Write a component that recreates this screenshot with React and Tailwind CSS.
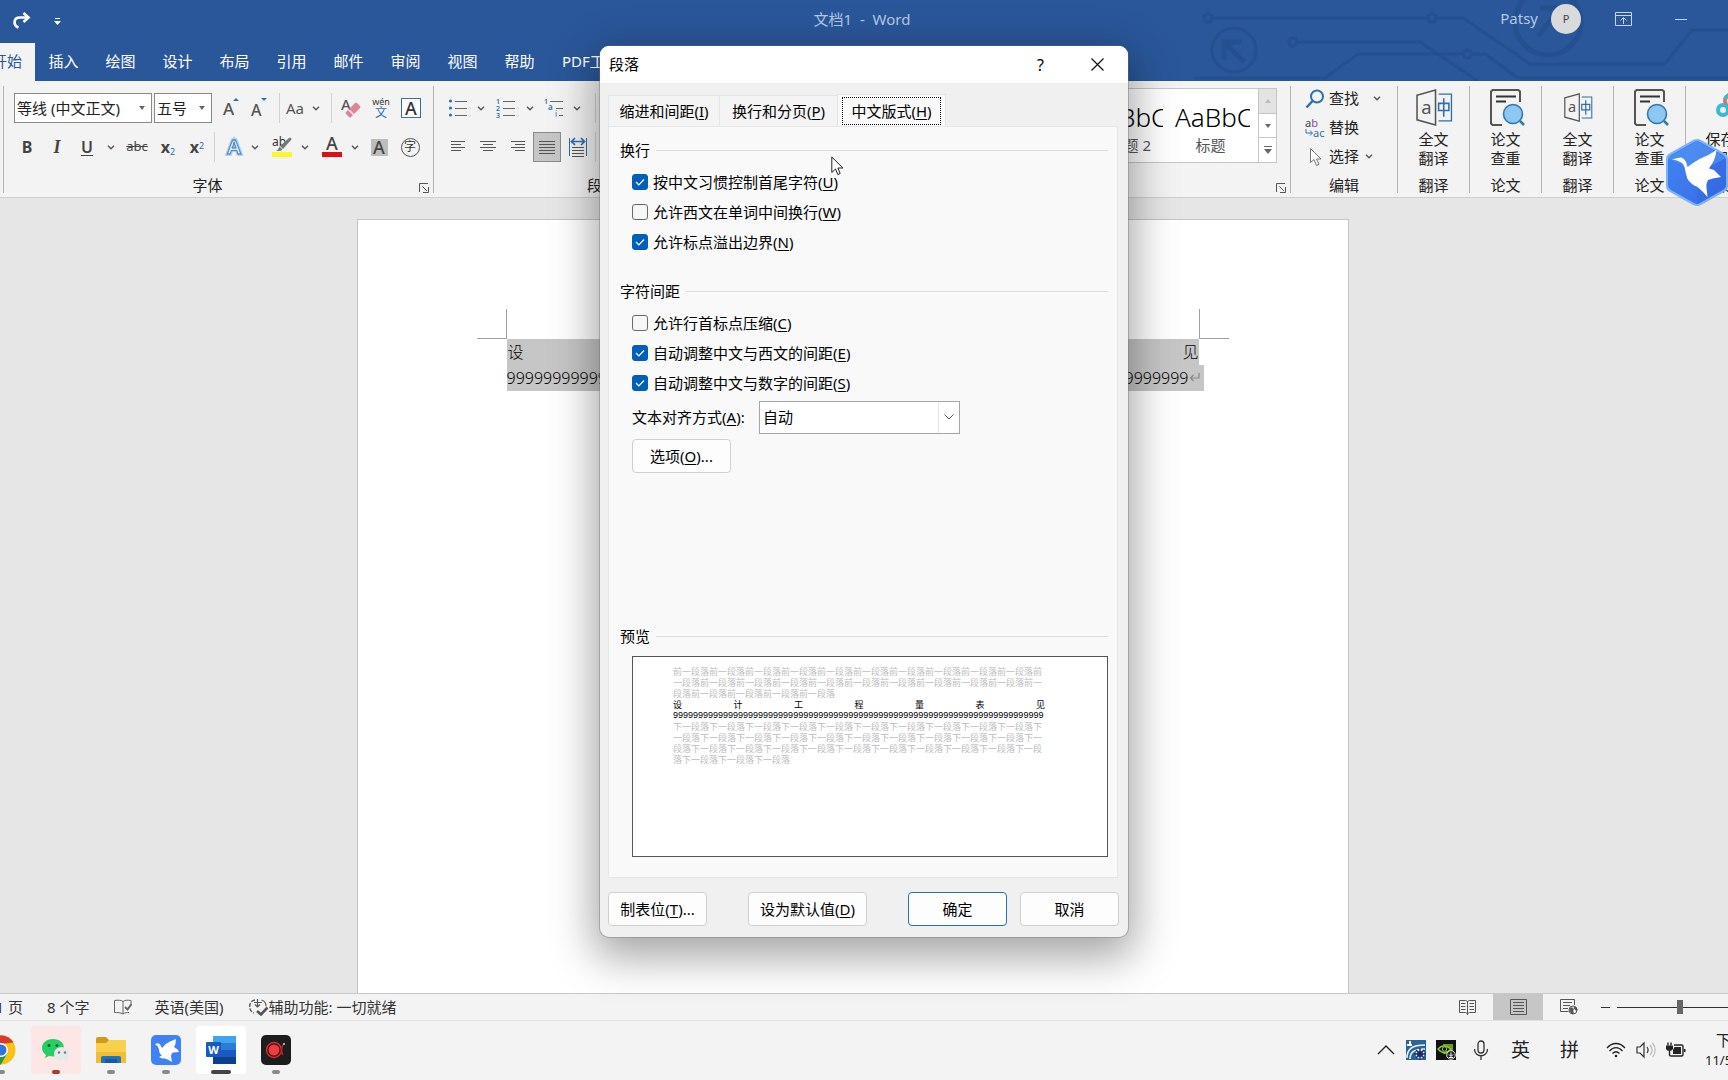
import React from "react";

const FONT = "font-['Noto_Sans','Noto_Sans_CJK_SC',sans-serif]";

function Chevron({ className = "w-4" }) {
  return (
    <span className={"flex shrink-0 justify-center " + className}>
      <svg width="8" height="5" viewBox="0 0 8 5" fill="none" stroke="#555" strokeWidth="1.4">
        <path d="M1 .8 4 3.8 7 .8" />
      </svg>
    </span>
  );
}

function Tool({ label, className = "w-[30px]", children }) {
  return (
    <button aria-label={label} className={"flex h-[30px] shrink-0 items-center justify-center " + className}>
      {children}
    </button>
  );
}

function Sep({ className = "mx-1" }) {
  return <span className={"h-[30px] w-px shrink-0 bg-[#d2d2d2] " + className} />;
}

function GroupLine() {
  return <span className="mt-[5px] h-[107px] w-px shrink-0 bg-[#b4b4b4]" />;
}

function Launcher({ className }) {
  return (
    <button aria-label="更多设置" className={"absolute bottom-1 " + className}>
      <svg width="10" height="10" viewBox="0 0 10 10" fill="none" stroke="#555" strokeWidth="1">
        <path d="M.5 9V.5H9M3.5 3.5 8 8M9.5 4v5.5H4" />
      </svg>
    </button>
  );
}

function Combo({ label, value, className }) {
  return (
    <label className={"relative flex h-[30px] shrink-0 items-center border border-[#8a8a8a] bg-white " + className}>
      <select aria-label={label} className="h-full w-full appearance-none bg-transparent pl-0.5 text-[15px] text-[#222] outline-none">
        <option>{value}</option>
      </select>
      <svg className="pointer-events-none absolute right-1.5" width="6" height="4" viewBox="0 0 6 4">
        <path d="M0 0h6L3 4z" fill="#666" />
      </svg>
    </label>
  );
}

function AlignIcon({ rows, width = 16 }) {
  return (
    <svg width={width} height="14" viewBox={`0 0 ${width} 14`} stroke="#555" strokeWidth="1">
      {rows.map(([a, b], i) => (
        <path key={i} d={`M${a} ${i * 3 + 1}.5H${b}`} />
      ))}
    </svg>
  );
}

function FontGroup() {
  return (
    <section className="relative w-[429px] shrink-0">
      <div className="flex items-center pl-[10px] pt-3">
        <Combo label="字体" value="等线 (中文正文)" className="w-[138px]" />
        <Combo label="字号" value="五号" className="ml-0.5 w-[58px]" />
        <Tool label="增大字号" className="ml-[5px] w-7">
          <svg width="20" height="22" viewBox="0 0 20 22">
            <text x="2" y="18" fontSize="17" fontWeight="500" fill="#555">A</text>
            <path d="m12 4 3-3 3 3z" fill="#2f6fae" />
          </svg>
        </Tool>
        <Tool label="减小字号" className="w-7">
          <svg width="20" height="22" viewBox="0 0 20 22">
            <text x="2" y="19" fontSize="16" fontWeight="500" fill="#555">A</text>
            <path d="m12 1 3 3 3-3z" fill="#2f6fae" />
          </svg>
        </Tool>
        <Sep className="ml-1.5 mr-1" />
        <Tool label="更改大小写" className="w-[42px]">
          <span className="text-[15px] text-[#555]">Aa</span>
          <Chevron className="ml-1 w-4" />
        </Tool>
        <Sep className="ml-[5px] mr-1" />
        <Tool label="清除格式">
          <svg width="20" height="24" viewBox="0 0 20 24">
            <text x="0" y="14" fontSize="15" fontWeight="500" fill="#555">A</text>
            <path d="M14 7q1-1 2 0l3 3q1 1 0 2l-6 6-5-5zM7 14l5 5-2 2q-1 1-2 0l-3-3q-1-1 0-2z" fill="#e08496" />
          </svg>
        </Tool>
        <Tool label="拼音指南">
          <svg width="20" height="24" viewBox="0 0 20 24">
            <text x="10" y="9" textAnchor="middle" fontSize="9" fill="#333">wén</text>
            <text x="10" y="21" textAnchor="middle" fontSize="12" fill="#2f6fae">文</text>
          </svg>
        </Tool>
        <Tool label="字符边框">
          <span className="flex h-5 w-5 items-center justify-center border border-[#3d6e9c] bg-white text-[18px] font-medium leading-none text-[#333]">A</span>
        </Tool>
      </div>
      <div className="flex items-center pl-2 pt-[9px]">
        <Tool label="加粗"><b className="text-[16px] text-[#444]">B</b></Tool>
        <Tool label="倾斜"><i className="font-['Liberation_Serif',serif] text-[18px] font-bold text-[#444]">I</i></Tool>
        <Tool label="下划线"><span className="border-b border-[#444] text-[16px] font-semibold leading-4 text-[#444]">U</span></Tool>
        <Chevron className="w-[18px]" />
        <Tool label="删除线" className="w-[34px]"><s className="text-[13px] text-[#444]">abc</s></Tool>
        <Tool label="下标" className="w-7">
          <span className="text-[16px] font-bold text-[#444]">x<sub className="text-[9px] font-normal text-[#2f6fae]">2</sub></span>
        </Tool>
        <Tool label="上标" className="w-[30px]">
          <span className="text-[16px] font-bold text-[#444]">x<sup className="text-[9px] font-normal text-[#2f6fae]">2</sup></span>
        </Tool>
        <Sep className="ml-0.5 mr-1" />
        <Tool label="文本效果">
          <svg width="20" height="22" viewBox="0 0 20 22">
            <text x="10" y="18" textAnchor="middle" fontSize="20" fontWeight="600" fill="#fff" stroke="#a9cfee" strokeWidth="3.5">A</text>
            <text x="10" y="18" textAnchor="middle" fontSize="20" fontWeight="600" fill="#fff" stroke="#3d7db8" strokeWidth="1">A</text>
          </svg>
        </Tool>
        <Chevron className="w-3" />
        <Tool label="突出显示" className="ml-1 w-[34px]">
          <svg width="22" height="22" viewBox="0 0 22 22">
            <text x="1" y="10" fontSize="12" fill="#333">ab</text>
            <path d="M20 2q1 1 0 2l-8 9-3-3 9-8q1-1 2 0zM8.500 10.500l3 3q-2 2-6 1.500 2-1 3-4.500z" fill="#777" />
            <path d="M1 16h20v5H1z" fill="#fbf82a" />
          </svg>
        </Tool>
        <Chevron className="w-3" />
        <Tool label="字体颜色" className="ml-1 w-[34px]">
          <svg width="20" height="22" viewBox="0 0 20 22">
            <text x="10" y="14" textAnchor="middle" fontSize="18" fontWeight="500" fill="#444">A</text>
            <path d="M0 16h20v5H0z" fill="#dc1010" />
          </svg>
        </Tool>
        <Chevron className="w-3" />
        <Tool label="字符底纹" className="ml-0.5 w-8">
          <span className="flex h-[17px] w-[17px] items-center justify-center bg-[#bdbdbd] text-[18px] font-medium leading-none text-[#444]">A</span>
        </Tool>
        <Tool label="带圈字符">
          <span className="flex h-[19px] w-[19px] items-center justify-center rounded-full border border-[#555] text-[12px] leading-none text-[#333]">字</span>
        </Tool>
      </div>
      <h2 className="absolute bottom-0 w-full pr-[22px] text-center text-[15px] leading-6">字体</h2>
      <Launcher className="right-1" />
    </section>
  );
}

function ListIcon({ marks }) {
  return (
    <svg width="20" height="20" viewBox="0 0 20 20">
      {marks.map((m, i) =>
        m ? (
          <text key={i} x="0" y={i * 7 + 6} fontSize="7" fontWeight="600" fill="#2f6fae">{m}</text>
        ) : (
          <circle key={i} cx="2.5" cy={i * 7 + 3} r="1.6" fill="#2f6fae" />
        )
      )}
      <path d="M7 3.5h12M7 10.5h12M7 17.5h12" stroke="#666" />
    </svg>
  );
}

function ParagraphGroup() {
  return (
    <section className="relative w-[300px] shrink-0">
      <div className="flex items-center pl-[9px] pt-3">
        <Tool label="项目符号"><ListIcon marks={["", "", ""]} /></Tool>
        <Chevron />
        <Tool label="编号" className="w-[34px]"><ListIcon marks={["1", "2", "3"]} /></Tool>
        <Chevron className="w-[14px]" />
        <Tool label="多级列表" className="w-[34px]">
          <svg width="20" height="20" viewBox="0 0 20 20">
            <text x="0" y="6" fontSize="7" fontWeight="600" fill="#2f6fae">1</text>
            <text x="4" y="12" fontSize="8" fontWeight="600" fill="#2f6fae">a</text>
            <text x="11" y="19" fontSize="8" fill="#2f6fae">i</text>
            <path d="M6 3.5h13M12 10.5h7M15 17.5h4" stroke="#666" />
          </svg>
        </Tool>
        <Chevron className="w-3" />
        <Sep className="ml-3" />
      </div>
      <div className="flex items-center pl-[9px] pt-[9px]">
        <Tool label="左对齐"><AlignIcon rows={[[1, 15], [1, 11], [1, 15], [1, 11]]} /></Tool>
        <Tool label="居中"><AlignIcon rows={[[0, 16], [3, 13], [0, 16], [3, 13]]} /></Tool>
        <Tool label="右对齐"><AlignIcon rows={[[1, 15], [5, 15], [1, 15], [5, 15]]} /></Tool>
        <button aria-label="两端对齐" aria-pressed="true" className="flex h-[30px] w-7 items-center justify-center border border-[#8b8b8b] bg-[#c6c6c6]">
          <AlignIcon rows={[[0, 16], [0, 16], [0, 16], [0, 16], [0, 16]]} />
        </button>
        <Tool label="分散对齐" className="w-[34px]">
          <svg width="18" height="20" viewBox="0 0 18 20" fill="none">
            <path d="M.5 1v18M17.500 1v18" stroke="#2f6fae" />
            <path d="M3 4.500h12M6 1 2.500 4.500 6 8M12 1l3.500 3.500L12 8" stroke="#2f6fae" strokeWidth="1.700" />
            <path d="M3 10.500h12M3 13.500h12M3 16.500h12M3 19.500h12" stroke="#555" />
          </svg>
        </Tool>
        <Sep className="ml-0" />
      </div>
      <h2 className="absolute bottom-0 w-full pl-9 text-center text-[15px] leading-6">段落</h2>
    </section>
  );
}

function StylesGroup() {
  return (
    <section className="relative w-[170px] shrink-0">
      <div className="ml-auto mr-[13px] mt-[7px] flex h-[75px] w-[157px] border border-[#c6c6c6] bg-white">
        <button className="w-[46px] shrink-0 overflow-hidden pt-1.5">
          <span className="ml-0.5 block w-10 overflow-hidden whitespace-nowrap text-left text-[26px] font-light leading-8 text-black">
            <span className="-ml-1">BbC</span>
          </span>
          <span className="block whitespace-nowrap pr-4 text-right text-[15px] leading-6 text-[#555]">题 2</span>
        </button>
        <button className="w-[91px] overflow-hidden pt-1.5">
          <span className="block pl-2 text-left text-[26px] font-light leading-8 text-black">
            <span className="block w-[75px] overflow-hidden whitespace-nowrap">AaBbC</span>
          </span>
          <span className="block pr-1 text-center text-[15px] leading-6 text-[#555]">标题</span>
        </button>
        <div className="flex w-[18px] shrink-0 flex-col border-l border-[#c6c6c6]">
          <button aria-label="上一行" className="flex flex-1 items-center justify-center bg-[#e3e3e3]">
            <svg width="6" height="4" viewBox="0 0 6 4"><path d="M0 4h6L3 0z" fill="#bbb" /></svg>
          </button>
          <button aria-label="下一行" className="flex flex-1 items-center justify-center border-y border-[#c6c6c6]">
            <svg width="6" height="4" viewBox="0 0 6 4"><path d="M0 0h6L3 4z" fill="#666" /></svg>
          </button>
          <button aria-label="更多样式" className="flex flex-1 items-center justify-center">
            <svg width="8" height="8" viewBox="0 0 8 8"><path d="M0 0h8v1H0zM0 3h8L4 8z" fill="#666" /></svg>
          </button>
        </div>
      </div>
      <Launcher className="right-1" />
    </section>
  );
}

function EditGroup() {
  return (
    <section className="relative w-[106px] shrink-0 pl-[14px] pt-[3px] text-[15px]">
      <button className="flex h-[29px] items-center">
        <svg className="mr-1" width="20" height="20" viewBox="0 0 20 20" fill="none" stroke="#2f6fae">
          <circle cx="12" cy="7.500" r="6" strokeWidth="2" />
          <path d="M7.500 12 1.500 18.500" strokeWidth="2.500" />
        </svg>
        查找
        <Chevron className="ml-2.5 w-4" />
      </button>
      <button className="flex h-[29px] items-center">
        <svg className="mr-1" width="20" height="20" viewBox="0 0 20 20">
          <text x="0" y="9" fontSize="11" fill="#444">a<tspan fill="#8c4aa8">b</tspan></text>
          <text x="8" y="19" fontSize="11" fill="#3d6e9c">ac</text>
          <path d="M1 11v4h6M5 12.500 7.500 15 5 17.500" fill="none" stroke="#2f6fae" />
        </svg>
        替换
      </button>
      <button className="flex h-[29px] items-center">
        <svg className="mr-1" width="20" height="20" viewBox="0 0 20 20" fill="#fff" stroke="#777">
          <path d="M5.500 1.500v14l3.500-3 2.500 6 2.500-1.200-2.500-5.300h4.500z" />
        </svg>
        选择
        <Chevron className="ml-0.5 w-4" />
      </button>
      <h2 className="absolute bottom-0 left-[38px] leading-6">编辑</h2>
    </section>
  );
}

function TranslateIcon({ size }) {
  return (
    <svg width={size} height={size} viewBox="0 0 36 36" fill="none">
      <path d="M1 6 19 1v34L1 30z" stroke="#555" strokeWidth="1.500" />
      <path d="M22 5h12.500v26H22" stroke="#2f6fae" strokeWidth="1.300" />
      <text x="5" y="24" fontSize="18" fill="#555">a</text>
      <path d="M22 14h10v7H22zM27 9v18" stroke="#2f6fae" strokeWidth="1.500" />
    </svg>
  );
}

function PaperIcon() {
  return (
    <svg width="36" height="37" viewBox="0 0 36 37" fill="none">
      <path d="M31 13V2.500L29.500 1H3.500L2 2.500v32L3.500 36H13" stroke="#555" strokeWidth="2" />
      <path d="M7 7.500h20M7 12.500h10" stroke="#333" strokeWidth="2" />
      <circle cx="24" cy="25" r="9.500" fill="#8cc8f3" stroke="#3578a8" strokeWidth="1.600" />
      <path d="m31 32 4 4" stroke="#3578a8" strokeWidth="2.500" />
    </svg>
  );
}

function BigGroup({ icon, lines, label, className = "w-[71px]" }) {
  return (
    <section className={"relative shrink-0 overflow-hidden text-[15px] " + className}>
      <button className="flex w-[71px] flex-col items-center pt-2">
        <span className="flex h-[41px] items-center pb-1 pl-0.5">{icon}</span>
        {lines.map((l) => (
          <span key={l} className="whitespace-nowrap leading-[19px]">{l}</span>
        ))}
      </button>
      <h2 className="absolute bottom-0 w-[71px] text-center leading-6">{label}</h2>
    </section>
  );
}

function CloudIcon() {
  return (
    <svg width="36" height="30" viewBox="0 0 36 30" fill="none" strokeWidth="4">
      <circle cx="21" cy="10" r="6" stroke="#ea6a6a" />
      <circle cx="13" cy="19" r="5" stroke="#37bcd0" />
      <path d="M15 8a6 6 0 0 1 7-4" stroke="#37bcd0" />
      <circle cx="27" cy="19" r="5" stroke="#3f8fe0" />
    </svg>
  );
}

function FloatingBird() {
  return (
    <svg className="absolute right-0 top-[138px]" width="62" height="69" viewBox="0 0 62 69">
      <defs>
        <linearGradient id="hex" x1="0" y1="0" x2="1" y2="1">
          <stop offset="0" stopColor="#3f86f0" />
          <stop offset="1" stopColor="#3a6ce8" />
        </linearGradient>
      </defs>
      <path d="M27 2q4-2 8 0l23 13q4 2 4 6v27q0 4-4 6L35 67q-4 2-8 0L4 54q-4-2-4-6V21q0-4 4-6z" fill="#7fb2f5" />
      <path d="M28 4q3-2 6 0l23 13q3 2 3 5v25q0 3-3 5L34 65q-3 2-6 0L5 52q-3-2-3-5V22q0-3 3-5z" fill="url(#hex)" />
      <path d="M2 20 31 3l29 17-29 15z" fill="#5a9cf6" opacity=".45" />
      <path d="M31 35v31L60 49V20z" fill="#2f5fe0" opacity=".35" />
      <path d="M6 21.500q5-1.500 9-2 5 1 6.500 9.500 5-4 12-8 10-4 17-9-1 8-4 13l-3.500 5.500 5 1.500 7 7q-8 1-13 3-2 3-1.500 8l1 9q-5-6-10-10-7-3-10-8-2-6-3-12-1-6-12.500-7.500z" fill="#fff" />
    </svg>
  );
}

const TABS = ["插入", "绘图", "设计", "布局", "引用", "邮件", "审阅", "视图", "帮助"];

function TitleBar() {
  return (
    <header className="relative h-[81px] shrink-0 overflow-hidden bg-[#2a579a] text-white">
      <svg className="absolute right-0 top-0" width="608" height="81" viewBox="0 0 608 81" fill="none" stroke="#1f4a85" strokeWidth="3" opacity=".5">
        <circle cx="88" cy="18" r="4" />
        <path d="M93 18h214M317 18h26l67 46h135l27-34h36" />
        <circle cx="312" cy="18" r="4" />
        <circle cx="173" cy="42" r="4" />
        <path d="M178 42h122l58 39M75 78h130l33-24h104M352 54h13l33 24h210" />
        <circle cx="347" cy="54" r="4" />
        <circle cx="114" cy="50" r="22" />
        <path d="M104 60V42h18M106 44l18 18" strokeWidth="5" />
        <circle cx="428" cy="22" r="33" strokeWidth="5" />
        <path d="M418 36 440 8M420 8h20v20" strokeWidth="5" />
      </svg>
      <div className="relative flex h-[43px] items-start">
        <button aria-label="重做" className="ml-3 mt-3">
          <svg width="19" height="17" viewBox="0 0 19 17" fill="none" stroke="#fff" strokeWidth="2.600">
            <path d="M6.500 15.500C1 13.500 1 5.500 8 5.500h8M11.500 1l5 4.500-5 4.500" />
          </svg>
        </button>
        <button aria-label="自定义快速访问工具栏" className="ml-[23px] mt-[18px]">
          <svg width="7" height="7" viewBox="0 0 7 7"><path d="M1 0h5v1H1zM0 3h7L3.500 7z" fill="#fff" /></svg>
        </button>
        <h1 className="absolute inset-x-0 top-[7px] whitespace-pre pr-1 text-center text-[15px] leading-6 text-[#b4c8e6]">文档1  -  Word</h1>
        <div className="ml-auto flex items-center pr-[41px] pt-1">
          <span className="pb-0.5 text-[15px] text-[#b4c8e6]">Patsy</span>
          <span className="ml-[13px] flex h-[30px] w-[30px] items-center justify-center rounded-full bg-[#d9dadb] text-[11px] text-[#444]">P</span>
          <button aria-label="功能区显示选项" className="ml-[34px]">
            <svg width="17" height="14" viewBox="0 0 17 14" fill="none" stroke="#c8d6ec">
              <path d="M.5.5h16v13H.5zM.5 3.500h16M8.500 12V6M5.500 8.500l3-3 3 3" />
            </svg>
          </button>
          <button aria-label="最小化" className="ml-[43px] h-4">
            <span className="block h-px w-3 bg-[#c8d6ec]" />
          </button>
        </div>
      </div>
      <nav className="relative flex h-[38px] text-[15px]">
        <button className="flex w-[35px] shrink-0 items-center justify-end bg-[#f3f3f3] pb-0.5 pr-[13px] text-[#2a579a]">
          <span className="whitespace-nowrap">开始</span>
        </button>
        {TABS.map((t) => (
          <button key={t} className="w-[57px] shrink-0 pb-0.5">{t}</button>
        ))}
        <button className="whitespace-nowrap pb-0.5 pl-[14px]">PDF工具集</button>
      </nav>
    </header>
  );
}

function Ribbon() {
  return (
    <div className="relative flex h-[117px] shrink-0 overflow-hidden border-b border-[#cfcfcf] bg-[#f3f3f3] text-[#222]">
      <div className="flex min-w-0 flex-1 overflow-hidden pl-[3px]">
        <GroupLine />
        <FontGroup />
        <GroupLine />
        <ParagraphGroup />
      </div>
      <div className="flex shrink-0">
        <StylesGroup />
        <GroupLine />
        <EditGroup />
        <GroupLine />
        <BigGroup icon={<TranslateIcon size={37} />} lines={["全文", "翻译"]} label="翻译" />
        <GroupLine />
        <BigGroup icon={<PaperIcon />} lines={["论文", "查重"]} label="论文" />
        <GroupLine />
        <BigGroup icon={<TranslateIcon size={29} />} lines={["全文", "翻译"]} label="翻译" />
        <GroupLine />
        <BigGroup icon={<PaperIcon />} lines={["论文", "查重"]} label="论文" />
        <GroupLine />
        <section className="relative w-[42px] overflow-hidden text-[15px]">
          <button className="flex w-[84px] flex-col items-center pt-2">
            <span className="flex h-[41px] items-center pb-2"><CloudIcon /></span>
            <span className="whitespace-nowrap leading-[19px]">保存到</span>
            <span className="whitespace-nowrap leading-[19px]">网盘</span>
          </button>
          <h2 className="absolute bottom-0 left-[28px] whitespace-nowrap leading-6">保存</h2>
        </section>
      </div>
    </div>
  );
}

const CHARS = ["设", "计", "工", "程", "量", "表", "见"];

function Page() {
  return (
    <main className="flex flex-1 justify-center overflow-hidden bg-[#e6e6e6] pr-[23px] pt-[21px]">
      <div className="w-[992px] border border-b-0 border-[#c3c3c3] bg-white pt-[89px]">
        <div className="flex justify-between px-[119px]">
          <span className="h-[30px] w-[30px] border-b border-r border-[#a0a0a0]" />
          <span className="h-[30px] w-[30px] border-b border-l border-[#a0a0a0]" />
        </div>
        <div className="ml-[149px] w-[692px] text-[16px] font-light leading-[26px] text-black">
          <p className="flex justify-between bg-[#c6c6c6] pl-px">
            {CHARS.map((c) => <span key={c}>{c}</span>)}
          </p>
          <p className="flex w-[697px] items-center whitespace-nowrap bg-[#c6c6c6]">
            <span className="flex w-[682px] justify-between">
              <span>{"9".repeat(37)}</span>
              <span>{"9".repeat(37)}</span>
            </span>
            <svg width="11" height="12" viewBox="0 0 11 12" fill="none" stroke="#888" strokeWidth="1.200"><path d="M10 1v5H1.500M4.500 3 1.500 6l3 3" /></svg>
          </p>
        </div>
      </div>
    </main>
  );
}

function StatusBar() {
  return (
    <div className="flex h-[27px] shrink-0 items-center overflow-hidden border-t border-[#c8c8c8] bg-[#f3f3f3] text-[15px] text-[#333]">
      <button className="flex w-[23px] shrink-0 justify-end whitespace-nowrap">第 1 页</button>
      <button className="ml-6">8 个字</button>
      <button aria-label="校对" className="ml-[25px]">
        <svg width="18" height="16" viewBox="0 0 18 16" fill="none" stroke="#666">
          <path d="M9 2.500C7 1 4 1 .5 1.500v12c3 0 6 0 8.500 1.500 2-1.500 4-1.500 6-1.500M9 2.500V15M9 2.500C11 1 13 1 17 1.500V5" />
          <path d="m11 8 2.500 2.500L17.500 5" strokeWidth="2" />
        </svg>
      </button>
      <button className="ml-[22px]">英语(美国)</button>
      <button className="ml-6 flex items-center">
        <svg width="21" height="18" viewBox="0 0 21 18" fill="none" stroke="#555">
          <path d="M7 2C0 3 0 13 6 15" strokeDasharray="4 1.500" strokeWidth="1.400" />
          <path d="M9.500 1v7M6 4.500h8M7 6.500 9.500 9 12 6.500M13.500 2c3 1 4.500 3 4.500 6" strokeWidth="1.200" />
          <path d="m9 13 4 3.500 6.500-7" strokeWidth="2.600" />
        </svg>
        辅助功能: 一切就绪
      </button>
      <div className="ml-auto flex h-full shrink-0 items-center">
        <button aria-label="阅读视图" className="mr-[17px]">
          <svg width="17" height="15" viewBox="0 0 17 15" fill="none" stroke="#555">
            <path d="M.5.5h6l2 1 2-1h6v12h-6l-2 1-2-1h-6zM8.500 1v14M2 3.500h4.500M2 6.500h4.500M2 9.500h4.500M10.500 3.500H15M10.500 6.500H15M10.500 9.500H15" />
          </svg>
        </button>
        <button aria-label="页面视图" aria-pressed="true" className="flex h-full w-[50px] items-center justify-center bg-[#c6c6c6]">
          <svg width="17" height="16" viewBox="0 0 17 16" fill="none" stroke="#555">
            <path d="M.5.5h16v15H.5zM3 3.500h11M3 6.500h11M3 9.500h11M3 12.500h11" />
          </svg>
        </button>
        <button aria-label="Web 版式视图" className="ml-[17px]">
          <svg width="18" height="16" viewBox="0 0 18 16" fill="none" stroke="#555">
            <path d="M14.500 6V.5H.5v12h8M3 3.500h9M3 6.500h7M3 9.500h5" />
            <circle cx="13" cy="11" r="4" fill="#f3f3f3" />
            <path d="M10 9.500c2-1.500 4 0 3 1.500s1 2 0 4c-2-1-3-3-3-5.500zM14 7.500q3 1 3 4l-2-1z" fill="#555" />
          </svg>
        </button>
        <button aria-label="缩小" className="ml-[23px] flex h-4 w-[9px] items-center"><span className="block h-px w-full bg-[#333]" /></button>
        <div className="ml-[7px] w-[111px] overflow-hidden">
          <input
            type="range"
            aria-label="缩放比例"
            defaultValue="50"
            className="block h-4 w-[126px] appearance-none bg-[linear-gradient(#333,#333)] bg-[length:100%_1px] bg-center bg-no-repeat [&::-webkit-slider-thumb]:h-[14px] [&::-webkit-slider-thumb]:w-[6px] [&::-webkit-slider-thumb]:appearance-none [&::-webkit-slider-thumb]:bg-[#666]"
          />
        </div>
      </div>
    </div>
  );
}

function TaskItem({ label, icon, bg = "", dot = "w-2 bg-[#8a8a8a]" }) {
  return (
    <button aria-label={label} className={"relative mr-[5px] flex h-12 w-[50px] shrink-0 items-center justify-center rounded " + bg}>
      {icon}
      <span className={"absolute bottom-0 h-1 rounded-full " + dot} />
    </button>
  );
}

function TaskBar() {
  return (
    <footer className="flex h-[60px] shrink-0 items-center overflow-hidden border-t border-[#e0e0e0] bg-[#f3f3f3] text-[#222]">
      <div className="-ml-6 flex pb-0.5">
        <TaskItem
          label="Chrome"
          icon={
            <svg width="30" height="30" viewBox="0 0 30 30">
              <circle cx="15" cy="15" r="14.500" fill="#fbc116" />
              <path d="M2.500 7.500a14.500 14.500 0 0 1 25 0L15 9z" fill="#d93a2b" />
              <path d="M2.500 7.500 9 18l6 11.500A14.500 14.500 0 0 1 2.500 7.500zM9 18l6 3.500L22 17l-7 12.500z" fill="#249a49" />
              <circle cx="15" cy="15" r="7" fill="#fff" />
              <circle cx="15" cy="15" r="5.500" fill="#2f72e0" />
            </svg>
          }
        />
        <TaskItem
          label="微信"
          bg="bg-[#fde6e6]"
          dot="w-2 bg-[#a83a2e]"
          icon={
            <svg width="30" height="26" viewBox="0 0 30 26">
              <path d="M12 2C5 2 1 6 1 11c0 3 1.500 5 4 7l-1 3 4-2c10 2 15-3 15-8 0-5-4-9-11-9z" fill="#25cf63" />
              <circle cx="8" cy="8.500" r="1.500" fill="#14602f" /><circle cx="16" cy="8.500" r="1.500" fill="#14602f" />
              <path d="M21 10c-5 0-8 3-8 7 0 5 5 8 11 6l3 1.500-1-2.500c5-4 2-12-5-12z" fill="#e6e9ea" />
              <circle cx="18" cy="15.500" r="1.200" fill="#777" /><circle cx="24" cy="15.500" r="1.200" fill="#777" />
            </svg>
          }
        />
        <TaskItem
          label="文件资源管理器"
          icon={
            <svg width="30" height="28" viewBox="0 0 30 28">
              <path d="M0 3q0-2 2-2h8l3 3-2 6H0z" fill="#cf9a1e" />
              <path d="M0 7h10l3-3h17v23H0z" fill="#f8d04b" />
              <path d="M0 16h30v11H0z" fill="#f2bd35" />
              <path d="M5 27v-5q0-2 2-2h16q2 0 2 2v5z" fill="#1f74bd" />
              <path d="M9 23h12v4H9z" fill="#155a9c" />
            </svg>
          }
        />
        <TaskItem
          label="迅雷"
          icon={
            <svg width="30" height="30" viewBox="0 0 30 30">
              <rect width="30" height="30" rx="5" fill="#3f82f5" />
              <path d="M4 9.500q3-2.500 5 0l2 3.500q4-5 8-6.500l6-2.500q0 5-2 8l3 2q1 1 2 3l-6 .5q-2 1-2 4l1 5.500q-4-3-7-3.500-4 0-6-1.500l3-1.500q-3-2-3-6-1-4-4-5z" fill="#fff" />
            </svg>
          }
        />
        <TaskItem
          label="Word"
          bg="bg-white"
          dot="w-5 bg-[#444]"
          icon={
            <svg width="30" height="30" viewBox="0 0 30 30">
              <path d="M7 1h23v7H7z" fill="#41a5ee" />
              <path d="M7 8h23v7H7z" fill="#2b7cd3" />
              <path d="M7 15h23v7H7z" fill="#185abd" />
              <path d="M7 22h23v7H7z" fill="#103f91" />
              <rect y="7" width="15" height="15" rx="1" fill="#185abd" />
              <text x="7.500" y="18.500" textAnchor="middle" fontSize="11" fontWeight="700" fill="#fff">W</text>
            </svg>
          }
        />
        <TaskItem
          label="录屏"
          icon={
            <svg width="30" height="30" viewBox="0 0 30 30">
              <rect width="30" height="30" rx="5" fill="#1d1d20" />
              <circle cx="13" cy="15" r="7.500" fill="none" stroke="#e0282e" strokeWidth="1.500" />
              <circle cx="13" cy="15" r="5.500" fill="#f03c40" />
              <path d="M22 10q-3 5 0 10" fill="none" stroke="#b8242a" strokeWidth="1.500" />
              <circle cx="23" cy="9" r="1" fill="#ddd" />
            </svg>
          }
        />
      </div>
      <div className="ml-auto flex shrink-0 items-center pb-0.5">
        <button aria-label="显示隐藏的图标">
          <svg width="18" height="11" viewBox="0 0 18 11" fill="none" stroke="#222" strokeWidth="1.400"><path d="m1 10 8-8 8 8" /></svg>
        </button>
        <svg className="ml-[11px]" width="20" height="20" viewBox="0 0 20 20">
          <path d="M0 0h20v20H0z" fill="#2a6599" />
          <path d="M1 18C1 9 6 5 19 5M4 19c0-7 4-10 15-10" stroke="#e8f1fa" strokeWidth="1.600" fill="none" />
          <circle cx="14" cy="14" r="4.500" fill="#e8f1fa" />
          <circle cx="14" cy="14" r="3" fill="#1b2c66" />
          <path d="M14 8v12M8 14h12M10 10l8 8M18 10l-8 8" stroke="#1b2c66" strokeWidth="1.400" />
          <path d="M3 1h2v3H3zM1 4h5v2H1z" fill="#fff" />
        </svg>
        <svg className="ml-[10px]" width="20" height="20" viewBox="0 0 20 20" fill="none">
          <path d="M0 0h20v20H0z" fill="#111" />
          <path d="M7 4h10v10H7z" fill="#68a018" />
          <path d="M2 9q5-6 13 0-7 7-13 0z" stroke="#8cc63f" strokeWidth="1.300" fill="#111" />
          <circle cx="8.500" cy="9" r="2.200" stroke="#8cc63f" />
          <circle cx="15" cy="15" r="4.300" fill="#222" stroke="#ddd" />
          <path d="M15 12.500V16M13 14.500l2 2 2-2M13 17.500h4" stroke="#fff" />
        </svg>
        <svg className="ml-[17px]" width="16" height="20" viewBox="0 0 16 20" fill="none" stroke="#333" strokeWidth="1.300">
          <rect x="5" y="1" width="6" height="12" rx="3" />
          <path d="M1.500 9c0 9 13 9 13 0M8 16v4" />
        </svg>
        <button className="ml-[22px] text-[19px] leading-6">英</button>
        <button className="ml-[30px] text-[19px] leading-6">拼</button>
        <svg className="ml-[27px]" width="20" height="16" viewBox="0 0 20 16" fill="none" stroke="#222" strokeWidth="1.300">
          <path d="M1 6C6 0 14 0 19 6M3.500 9C7.500 4.500 12.500 4.500 16.500 9M6.500 11.500c2.500-2.500 4.500-2.500 7 0" />
          <circle cx="10" cy="14" r="1.300" fill="#222" stroke="none" />
        </svg>
        <svg className="ml-[10px]" width="20" height="18" viewBox="0 0 20 18" fill="none" stroke="#333" strokeWidth="1.200">
          <path d="M1 6v6h3l4 4V2L4 6z" />
          <path d="M11 6c1.500 2 1.500 4 0 6" />
          <path d="M14 4c2.500 3 2.500 7 0 10M16.500 2c3.500 4 3.500 10 0 14" stroke="#bbb" />
        </svg>
        <svg className="ml-[10px]" width="20" height="16" viewBox="0 0 20 16" fill="none" stroke="#222" strokeWidth="1.400">
          <path d="M8 3h7.500q1.500 0 1.500 1.500v8q0 1.500-1.500 1.500H6" />
          <path d="M8.500 5H15v7H7V8zM18 7h1.500v3H18zM0 3.500h7V7q-1 2-3.500 2T0 7z" fill="#222" stroke="none" />
          <path d="M2 .5v3M5 .5v3M3.500 9v4q0 1 1.500 1h1" />
        </svg>
        <div className="ml-[19px] w-[23px] overflow-hidden text-[13px] leading-5">
          <div className="flex w-[72px] flex-col whitespace-nowrap">
            <span className="pl-[11px] text-[15px]">下午 3:21</span>
            <span>11/5/2022</span>
          </div>
        </div>
      </div>
    </footer>
  );
}

function Key({ text, k, after = "" }) {
  return <>{text}(<span className="underline underline-offset-2">{k}</span>){after}</>;
}

function Section({ title }) {
  return (
    <div className="flex items-center gap-[6px]">
      <h3 className="leading-6">{title}</h3>
      <span className="h-px flex-1 bg-[#dcdcdc]" />
    </div>
  );
}

function Check({ text, k, checked }) {
  return (
    <label className="flex h-[30px] items-center">
      <span className="relative flex h-4 w-4">
        <input
          type="checkbox"
          defaultChecked={checked}
          className="peer h-4 w-4 appearance-none rounded-[3px] border border-[#6a6a6a] bg-[#f6f6f6] checked:border-[#005fb8] checked:bg-[#005fb8]"
        />
        <svg className="pointer-events-none absolute left-[3px] top-1 hidden peer-checked:block" width="10" height="8" viewBox="0 0 10 8" fill="none" stroke="#fff" strokeWidth="1.200">
          <path d="m1 4 2.800 2.800L9 1.500" />
        </svg>
      </span>
      <span className="ml-[5px]"><Key text={text} k={k} /></span>
    </label>
  );
}

function DialogButton({ className, children }) {
  return (
    <button className={"flex h-[34px] items-center justify-center rounded border bg-[#fdfdfd] " + className}>
      <span className="whitespace-nowrap">{children}</span>
    </button>
  );
}

const PREV = "前一段落";
const NEXT = "下一段落";

function Preview() {
  return (
    <div className="ml-3 mt-2 h-[201px] border border-[#555] bg-white pl-10 pt-[9px] text-[9px] leading-[11px] text-[#bdbdbd]">
      <div className="w-[372px] whitespace-nowrap">
        <p>{PREV.repeat(10)}前</p>
        <p>{"一段落前".repeat(10)}一</p>
        <p>段落{PREV.repeat(4)}</p>
        <p className="flex justify-between text-black">{CHARS.map((c) => <span key={c}>{c}</span>)}</p>
        <p className="font-['Liberation_Sans',sans-serif] text-black">{"9".repeat(74)}</p>
        <p>{NEXT.repeat(10)}下</p>
        <p>{"一段落下".repeat(10)}一</p>
        <p>段落{NEXT.repeat(9)}下一段</p>
        <p>落{NEXT.repeat(3)}</p>
      </div>
    </div>
  );
}

function ParagraphDialog() {
  return (
    <div className="absolute inset-0 flex items-start justify-center pt-[46px]">
      <div
        role="dialog"
        aria-label="段落"
        className="w-[528px] overflow-hidden rounded-[9px] bg-[#f0f0f0] text-[15px] text-black shadow-[0_0_0_1px_rgba(110,110,110,0.4),0_14px_44px_6px_rgba(0,0,0,0.36)]"
      >
        <div className="flex h-[37px] items-center bg-white pl-[9px]">
          <h2>段落</h2>
          <button aria-label="帮助" className="ml-auto mr-[47px] text-[16px]">?</button>
          <button aria-label="关闭" className="mr-6">
            <svg width="13" height="13" viewBox="0 0 13 13" fill="none" stroke="#111" strokeWidth="1.200"><path d="m.5.5 12 12M12.500.5l-12 12" /></svg>
          </button>
        </div>
        <div className="pl-2 pr-2.5 pt-[11px]">
          <div role="tablist" className="flex h-8 items-end">
            <button role="tab" className="h-[31px] w-[112px] border border-b-0 border-[#e6e6e6] bg-[#f4f4f4]"><Key text="缩进和间距" k="I" /></button>
            <button role="tab" className="h-[31px] w-[117px] border border-x-0 border-b-0 border-[#e6e6e6] bg-[#f4f4f4]"><Key text="换行和分页" k="P" /></button>
            <button role="tab" aria-selected="true" className="h-8 w-[109px] border border-b-0 border-[#e3e3e3] bg-[#f9f9f9] px-1 pb-0.5 pt-0.5">
              <span className="flex h-7 items-center justify-center border border-dotted border-black"><span><Key text="中文版式" k="H" /></span></span>
            </button>
          </div>
          <div className="border border-[#e6e6e6] bg-[#f9f9f9] pb-5 pl-[11px] pr-[9px] pt-[11px]">
            <Section title="换行" />
            <div className="pl-3 pt-[5px]">
              <Check text="按中文习惯控制首尾字符" k="U" checked />
              <Check text="允许西文在单词中间换行" k="W" />
              <Check text="允许标点溢出边界" k="N" checked />
            </div>
            <div className="pt-[22px]"><Section title="字符间距" /></div>
            <div className="pl-3 pt-[5px]">
              <Check text="允许行首标点压缩" k="C" />
              <Check text="自动调整中文与西文的间距" k="E" checked />
              <Check text="自动调整中文与数字的间距" k="S" checked />
              <div className="flex h-[38px] items-center">
                <label htmlFor="align" className="w-[127px]"><Key text="文本对齐方式" k="A" after=":" /></label>
                <span className="relative flex h-[33px] w-[201px] items-center border border-[#a6a6a6] bg-white">
                  <select id="align" className="h-full w-full appearance-none bg-transparent pl-[3px] outline-none"><option>自动</option></select>
                  <span className="pointer-events-none absolute right-0 flex h-full w-[21px] items-center justify-center border-l border-[#e4e4e4]">
                    <svg width="10" height="6" viewBox="0 0 10 6" fill="none" stroke="#555"><path d="m.5.5 4.500 4.500L9.500.5" /></svg>
                  </span>
                </span>
              </div>
              <DialogButton className="mt-[3px] w-[99px] border-[#cfcfcf]"><Key text="选项" k="O" after="..." /></DialogButton>
            </div>
            <div className="pt-[151px]"><Section title="预览" /></div>
            <Preview />
          </div>
        </div>
        <div className="flex pb-[11px] pl-2 pr-[9px] pt-[14px]">
          <DialogButton className="w-[99px] border-[#cfcfcf]"><Key text="制表位" k="T" after="..." /></DialogButton>
          <DialogButton className="ml-[41px] w-[119px] border-[#cfcfcf]"><Key text="设为默认值" k="D" /></DialogButton>
          <DialogButton className="ml-auto w-[99px] border-[#2a6fb4]">确定</DialogButton>
          <DialogButton className="ml-[13px] w-[99px] border-[#cfcfcf]">取消</DialogButton>
        </div>
      </div>
    </div>
  );
}

export default function App() {
  return (
    <div className={"relative flex h-screen flex-col overflow-hidden " + FONT}>
      <TitleBar />
      <Ribbon />
      <Page />
      <StatusBar />
      <TaskBar />
      <ParagraphDialog />
      <FloatingBird />
      <svg className="absolute left-[831px] top-[156px]" width="13" height="20" viewBox="0 0 13 20" fill="#fff" stroke="#222">
        <path d="M.8 1v15.500l3.700-3.500 2.300 5.500 2.400-1L6.900 12h5z" />
      </svg>
    </div>
  );
}
